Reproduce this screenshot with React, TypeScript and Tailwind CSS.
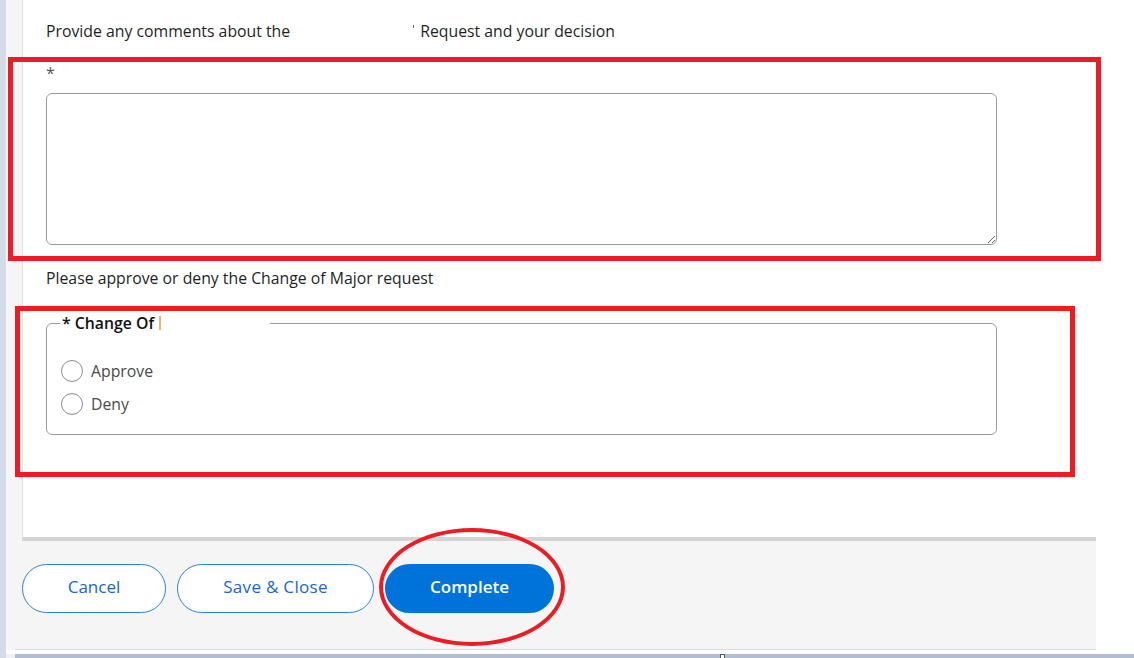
import React from "react";

function Radio({ label }: { label: string }) {
  return (
    <label className="flex h-[33px] items-center">
      <span className="ml-[1px] block h-[22px] w-[22px] rounded-full border border-[#8c8c8c] bg-white" />
      <span className="ml-[8px] text-[15.8px] leading-[24px] text-[#4a4a4a]">{label}</span>
    </label>
  );
}

export default function App() {
  return (
    <div
      className="relative flex h-[658px] w-[1134px] overflow-hidden bg-white text-[#1e1e1e]"
      style={{ fontFamily: '"Open Sans", "Noto Sans", Arial, sans-serif' }}
    >
      {/* left strip */}
      <div className="h-full w-[6px] shrink-0 bg-[#d3dbe7]" />

      <div className="flex h-full w-[1128px] flex-col">
        <div className="flex h-[654px]">
          <div className="flex w-[1090px] flex-col bg-[#f5f5f5]">
            {/* main white panel */}
            <div className="ml-[16px] flex h-[541px] flex-col border-b-4 border-l border-b-[#d4d4d4] border-l-[#e2e2e2] bg-white pl-[23px]">
              <p className="mt-[19px] flex items-start text-[15.8px] leading-[24px] text-[#1f1f1f]">
                <span>Provide any comments about the</span>
                <span className="inline-block w-[123px]" />
                <span className="mt-[6px] inline-block h-[3px] w-[1px] bg-[#666]" />
                <span className="ml-[6px]">Request and your decision</span>
              </p>
              <div className="mt-[18px] text-[16px] leading-[24px] text-[#555]">*</div>
              <textarea className="mt-[8px] block h-[152px] w-[951px] rounded-[6px] border border-[#9a9a9a] bg-white" />
              <p className="mt-[21px] text-[15.8px] leading-[24px] text-[#1f1f1f]">
                Please approve or deny the Change of Major request
              </p>
              <fieldset className="mt-[21px] w-[951px] rounded-[6px] border border-[#9a9a9a] pb-[14px] pl-[13px] pt-[19px]">
                <legend className="flex w-[210px] items-center px-[2px] text-[15.8px] font-semibold leading-[24px] text-[#111]">
                  <span>* Change Of</span>
                  <span className="ml-[5px] inline-block h-[14px] w-[2px] bg-[#f3b36a]" />
                </legend>
                <Radio label="Approve" />
                <Radio label="Deny" />
              </fieldset>
            </div>

            {/* footer */}
            <div className="flex h-[108px] items-start gap-[11px] pl-[16px] pt-[23px]">
              <button className="h-[49px] w-[144px] rounded-full border border-[#2a7fe0] bg-white pb-[3px] text-[17px] text-[#1766d1]">
                Cancel
              </button>
              <button className="h-[49px] w-[197px] rounded-full border border-[#2a7fe0] bg-white pb-[3px] text-[17px] tracking-[0.3px] text-[#1766d1]">
                Save &amp; Close
              </button>
              <button className="h-[49px] w-[169px] rounded-full bg-[#0073da] pb-[3px] text-[17px] font-semibold text-white">
                Complete
              </button>
            </div>
            <div className="ml-[9px] h-[1px] bg-[#d9d9d9]" />
            <div className="flex-1 bg-white" />
          </div>
          <div className="flex-1 bg-white" />
        </div>
        <div className="relative flex h-[4px]">
          <div className="w-[9px] bg-[#eef0f3]" />
          <div className="flex-1 bg-[#b2bed0]" />
          <span className="absolute left-[714px] top-0 h-[4px] w-[5px] border border-b-0 border-[#555] bg-white" />
        </div>
      </div>

      {/* annotations */}
      <div className="pointer-events-none absolute left-[8px] top-[57px] h-[204px] w-[1093px] border-[5px] border-[#ed1c24]" />
      <div className="pointer-events-none absolute left-[15px] top-[306px] h-[171px] w-[1060px] border-[5px] border-[#ed1c24]" />
      <div className="pointer-events-none absolute left-[379px] top-[528px] h-[118px] w-[186px] rounded-[50%] border-[4px] border-[#ed1c24]" />
    </div>
  );
}
